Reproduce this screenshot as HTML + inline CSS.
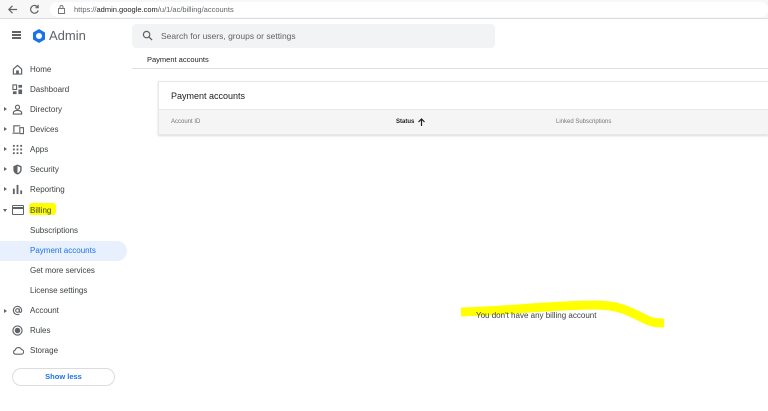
<!DOCTYPE html>
<html><head><meta charset="utf-8"><style>
*{box-sizing:border-box;margin:0;padding:0}
body{width:768px;height:411px;overflow:hidden;background:#fff;font-family:"Liberation Sans",Arial,sans-serif;color:#3c4043;position:relative}
.abs{position:absolute}
.top{left:0;top:0;width:768px;height:19px;background:#f7f7f7;border-bottom:1px solid #dadce0}
.url{left:50px;top:2px;width:718px;height:15px;background:#fff;border-radius:8px;font-size:7.5px;color:#5f6368;padding:3px 0 0 24px}
.url b{color:#202124;font-weight:normal}
.nav{font-size:8px;color:#3c4043}
.nav .t{position:absolute;left:30px}
.nav svg{position:absolute;left:12px}
.arr{position:absolute;left:4px;width:0;height:0;border-top:2px solid transparent;border-bottom:2px solid transparent;border-left:3px solid #5f6368}
</style></head><body>
<div class="abs top"></div>
<svg class="abs" style="left:7px;top:4px" width="11" height="11" viewBox="0 0 12 12"><path d="M11 6H2M6 2L2 6l4 4" stroke="#5f6368" stroke-width="1.3" fill="none"/></svg>
<svg class="abs" style="left:29px;top:4px" width="11" height="11" viewBox="0 0 12 12"><path d="M9.5 3.5A4.2 4.2 0 1 0 10 7" stroke="#5f6368" stroke-width="1.3" fill="none"/><path d="M10 1v3H7" stroke="#5f6368" stroke-width="1.3" fill="none"/></svg>
<div class="abs url"><svg style="position:absolute;left:8px;top:3px" width="7" height="9" viewBox="0 0 7 9"><rect x="0.5" y="3.5" width="6" height="5" fill="none" stroke="#777"/><path d="M2 3.5V2a1.5 1.5 0 0 1 3 0v1.5" fill="none" stroke="#777"/></svg>https://<b>admin.google.com</b>/u/1/ac/billing/accounts</div>

<!-- header -->
<div class="abs" style="left:12px;top:31px;width:9px;height:1.5px;background:#5f6368;box-shadow:0 3px 0 #5f6368,0 6px 0 #5f6368"></div>
<svg class="abs" style="left:31px;top:28px" width="16" height="16" viewBox="0 0 16 16"><polygon points="8,1 14,4.5 14,11.5 8,15 2,11.5 2,4.5" fill="#1a73e8"/><circle cx="8" cy="8" r="3" fill="#fff"/></svg>
<div class="abs" style="left:49px;top:28px;font-size:13px;color:#5f6368">Admin</div>
<div class="abs" style="left:132px;top:24px;width:363px;height:24px;background:#f1f3f4;border-radius:4px"></div>
<svg class="abs" style="left:142px;top:30px" width="11" height="11" viewBox="0 0 12 12"><circle cx="5" cy="5" r="3.5" stroke="#5f6368" stroke-width="1.3" fill="none"/><path d="M7.5 7.5L11 11" stroke="#5f6368" stroke-width="1.4"/></svg>
<div class="abs" style="left:161px;top:31px;font-size:8.5px;color:#5f6368">Search for users, groups or settings</div>
<div class="abs" style="left:147px;top:55px;font-size:7.5px;color:#202124">Payment accounts</div>
<div class="abs" style="left:132px;top:68px;width:636px;height:1px;background:#e0e0e0"></div>

<!-- card -->
<div class="abs" style="left:158px;top:81px;width:610px;height:54px;border:1px solid #e8e8e8;border-right:none;box-shadow:0 1px 2px rgba(0,0,0,.15)"></div>
<div class="abs" style="left:171px;top:91px;font-size:9px;color:#202124">Payment accounts</div>
<div class="abs" style="left:159px;top:109px;width:609px;height:25px;background:#f5f5f5;border-top:1px solid #e8e8e8"></div>
<div class="abs" style="left:171px;top:119px;font-size:6px;color:#757575">Account ID</div>
<div class="abs" style="left:396px;top:119px;font-size:6px;color:#202124;font-weight:bold">Status</div>
<svg class="abs" style="left:418px;top:118px" width="7" height="8" viewBox="0 0 7 8"><path d="M3.5 8V1M0.5 4l3-3 3 3" stroke="#202124" stroke-width="1.2" fill="none"/></svg>
<div class="abs" style="left:556px;top:119px;font-size:6px;color:#757575">Linked Subscriptions</div>

<!-- sidebar -->
<div class="nav">
<svg style="top:64px" width="11" height="11" viewBox="0 0 12 12"><path d="M1.5 5.5L6 1.5l4.5 4V11h-9z" fill="none" stroke="#5f6368" stroke-width="1.3"/><rect x="4.5" y="7" width="3" height="4" fill="#5f6368"/></svg><div class="t" style="top:65px">Home</div>
<svg style="top:84px" width="11" height="11" viewBox="0 0 12 12"><rect x="1" y="1" width="4" height="5" fill="none" stroke="#5f6368" stroke-width="1.2"/><rect x="7" y="1" width="4" height="3" fill="#5f6368"/><rect x="1" y="8" width="4" height="3" fill="#5f6368"/><rect x="7" y="6" width="4" height="5" fill="#5f6368"/></svg><div class="t" style="top:85px">Dashboard</div>
<span class="arr" style="top:107px"></span><svg style="top:104px" width="11" height="11" viewBox="0 0 12 12"><circle cx="6" cy="3.5" r="2.2" fill="none" stroke="#5f6368" stroke-width="1.3"/><path d="M1.5 11V9.5c0-1.5 2-2.5 4.5-2.5s4.5 1 4.5 2.5V11z" fill="none" stroke="#5f6368" stroke-width="1.3"/></svg><div class="t" style="top:105px">Directory</div>
<span class="arr" style="top:127px"></span><svg style="top:124px" width="12" height="11" viewBox="0 0 13 12"><path d="M2 9V2h7M0.5 10h7" stroke="#5f6368" stroke-width="1.3" fill="none"/><rect x="8.5" y="4" width="4" height="6.5" fill="none" stroke="#5f6368" stroke-width="1.2"/></svg><div class="t" style="top:125px">Devices</div>
<span class="arr" style="top:147px"></span><svg style="top:144px" width="11" height="11" viewBox="0 0 12 12" fill="#5f6368"><rect x="1" y="1" width="2" height="2"/><rect x="5" y="1" width="2" height="2"/><rect x="9" y="1" width="2" height="2"/><rect x="1" y="5" width="2" height="2"/><rect x="5" y="5" width="2" height="2"/><rect x="9" y="5" width="2" height="2"/><rect x="1" y="9" width="2" height="2"/><rect x="5" y="9" width="2" height="2"/><rect x="9" y="9" width="2" height="2"/></svg><div class="t" style="top:145px">Apps</div>
<span class="arr" style="top:167px"></span><svg style="top:164px" width="11" height="11" viewBox="0 0 12 12"><path d="M6 0.5L10.5 2.5V6c0 3-2 4.8-4.5 5.5C3.5 10.8 1.5 9 1.5 6V2.5z" fill="#5f6368"/><path d="M6 2v8" stroke="#fff" stroke-width="0"/><path d="M6 2.2L9 3.5V6c0 2-1.3 3.3-3 3.9z" fill="#fff"/></svg><div class="t" style="top:165px">Security</div>
<span class="arr" style="top:187px"></span><svg style="top:184px" width="11" height="11" viewBox="0 0 12 12" fill="#5f6368"><rect x="1" y="5" width="2" height="6"/><rect x="5" y="1" width="2" height="10"/><rect x="9" y="7" width="2" height="4"/></svg><div class="t" style="top:185px">Reporting</div>
<span class="abs" style="left:3px;top:209px;border-left:2px solid transparent;border-right:2px solid transparent;border-top:3px solid #5f6368"></span>
<span class="abs" style="left:12px;top:205px;width:12px;height:10px;border:1.5px solid #5f6368;border-radius:1px"></span>
<span class="abs" style="left:13px;top:207px;width:10px;height:1.5px;background:#5f6368"></span>
<span class="abs" style="left:29px;top:203px;width:27px;height:12px;background:#ffff00;border-radius:3px"></span>
<div class="t" style="top:206px">Billing</div>
<div class="t" style="top:226px">Subscriptions</div>
<span class="abs" style="left:0;top:241px;width:127px;height:20px;background:#e8f0fe;border-radius:0 10px 10px 0"></span>
<div class="t" style="top:246px;color:#1a73e8">Payment accounts</div>
<div class="t" style="top:266px">Get more services</div>
<div class="t" style="top:286px">License settings</div>
<span class="arr" style="top:309px"></span><svg style="top:305px" width="11" height="11" viewBox="0 0 12 12"><circle cx="6" cy="6" r="2" fill="none" stroke="#5f6368" stroke-width="1.2"/><path d="M8 4v3c0 1.5 2.5 1.5 2.5 -1A4.5 4.5 0 1 0 8 10" fill="none" stroke="#5f6368" stroke-width="1.2"/></svg><div class="t" style="top:306px">Account</div>
<svg style="top:325px" width="11" height="11" viewBox="0 0 12 12"><circle cx="6" cy="6" r="5" fill="none" stroke="#5f6368" stroke-width="1.3"/><circle cx="6" cy="6" r="3" fill="#5f6368"/></svg><div class="t" style="top:326px">Rules</div>
<svg style="top:345px" width="12" height="11" viewBox="0 0 13 12"><path d="M3.5 10h6.5a2.5 2.5 0 0 0 0.3-5A3.6 3.6 0 0 0 3.5 5.5 2.3 2.3 0 0 0 3.5 10z" fill="none" stroke="#5f6368" stroke-width="1.2"/></svg><div class="t" style="top:346px">Storage</div>
</div>
<div class="abs" style="left:12px;top:368px;width:103px;height:18px;border:1px solid #dadce0;border-radius:9px;font-size:7.5px;color:#1a73e8;text-align:center;line-height:16px;font-weight:bold">Show less</div>

<!-- empty message with highlight -->
<svg class="abs" style="left:455px;top:298px" width="215" height="35"><path d="M6 14 C50 13,100 7,140 7 C165 7,175 14,188 20 C195 24,200 25,209 25" stroke="#ffff00" stroke-width="9" fill="none" stroke-linecap="butt"/></svg>
<div class="abs" style="left:476px;top:311px;font-size:8px;color:#3c4043">You don't have any billing account</div>
</body></html>
